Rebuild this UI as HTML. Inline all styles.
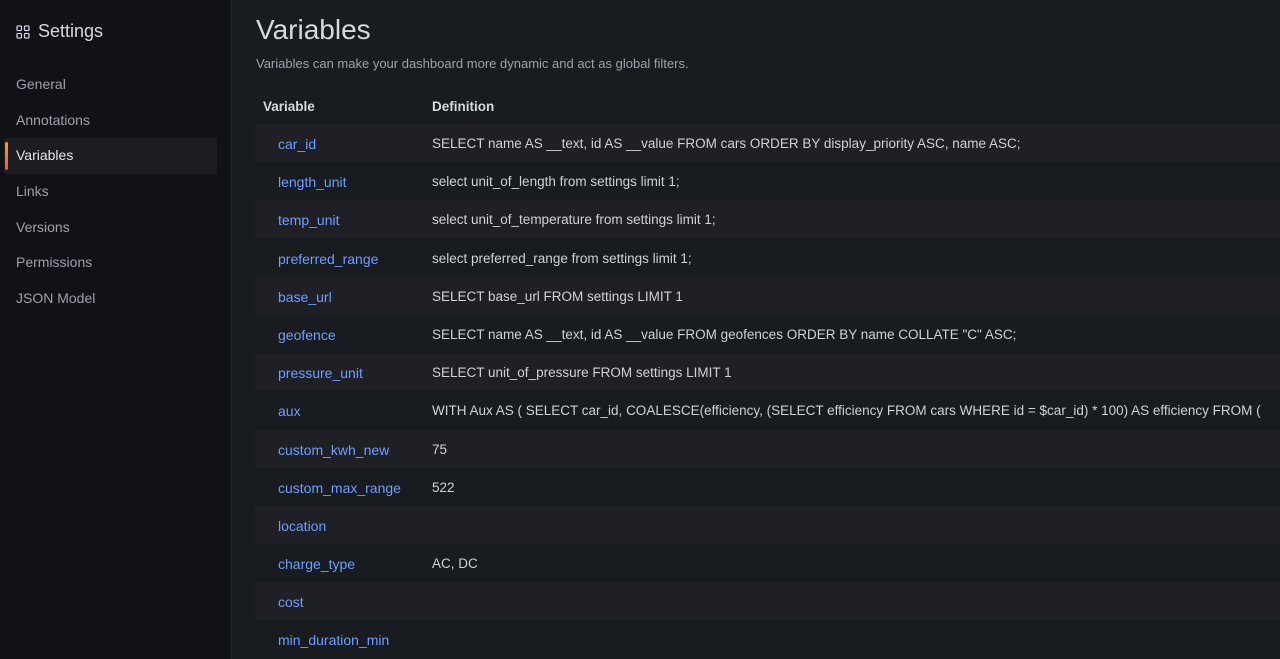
<!DOCTYPE html>
<html><head><style>
*{margin:0;padding:0;box-sizing:border-box}
body{width:1280px;height:659px;overflow:hidden;background:#181b1f;font-family:"Liberation Sans",sans-serif;color:#ccccdc;position:relative}
.side{position:absolute;left:0;top:0;width:232px;height:659px;background:#111217;border-right:1px solid #25272d}
.st{position:absolute;left:16px;top:21px;font-size:18px;color:#d8d9e0;display:flex;align-items:center;gap:8px}
.nav{position:absolute;left:4px;top:67px;width:213px}
.nav div{height:35.7px;line-height:35.7px;padding-left:12px;font-size:14px;color:#9fa1ab;border-radius:2px;position:relative}
.nav .a{background:#1c1d23;color:#e4e5ea}
.nav .a:before{content:"";position:absolute;left:1px;top:4px;bottom:4px;width:3px;border-radius:2px;background:linear-gradient(#ff9830,#f05a28)}
h1{position:absolute;left:256px;top:14px;font-size:28px;font-weight:400;color:#d8d9e0}
.sub{position:absolute;left:256px;top:56px;font-size:13px;color:#9fa1ab}
.hd{position:absolute;top:99px;font-size:13.5px;font-weight:bold;color:#d8d9e0}
.rows{position:absolute;left:255px;top:124px;right:0}
.r{height:38.2px;line-height:38.2px;font-size:13.5px;position:relative;white-space:nowrap;overflow:hidden}
.r:nth-child(odd){background:#1e2026}
.r .v{position:absolute;left:23px;color:#6e9fff;font-size:14px;top:1px}
.r .d{position:absolute;left:177px;color:#d0d1d9;top:1px}
</style></head><body>
<div class="side">
<div class="st"><svg width="14" height="14" viewBox="0 0 14 14" fill="none" stroke="#ccccdc" stroke-width="1.3"><rect x="1" y="1" width="4.5" height="4.5" rx="1"/><rect x="8.5" y="1" width="4.5" height="4.5" rx="1"/><rect x="1" y="8.5" width="4.5" height="4.5" rx="1"/><rect x="8.5" y="8.5" width="4.5" height="4.5" rx="1"/></svg>Settings</div>
<div class="nav"><div>General</div><div>Annotations</div><div class="a">Variables</div><div>Links</div><div>Versions</div><div>Permissions</div><div>JSON Model</div></div>
</div>
<h1>Variables</h1>
<div class="sub">Variables can make your dashboard more dynamic and act as global filters.</div>
<div class="hd" style="left:263px">Variable</div>
<div class="hd" style="left:432px">Definition</div>
<div class="rows">
<div class="r"><span class="v">car_id</span><span class="d">SELECT name AS __text, id AS __value FROM cars ORDER BY display_priority ASC, name ASC;</span></div>
<div class="r"><span class="v">length_unit</span><span class="d">select unit_of_length from settings limit 1;</span></div>
<div class="r"><span class="v">temp_unit</span><span class="d">select unit_of_temperature from settings limit 1;</span></div>
<div class="r"><span class="v">preferred_range</span><span class="d">select preferred_range from settings limit 1;</span></div>
<div class="r"><span class="v">base_url</span><span class="d">SELECT base_url FROM settings LIMIT 1</span></div>
<div class="r"><span class="v">geofence</span><span class="d">SELECT name AS __text, id AS __value FROM geofences ORDER BY name COLLATE "C" ASC;</span></div>
<div class="r"><span class="v">pressure_unit</span><span class="d">SELECT unit_of_pressure FROM settings LIMIT 1</span></div>
<div class="r"><span class="v">aux</span><span class="d">WITH Aux AS ( SELECT car_id, COALESCE(efficiency, (SELECT efficiency FROM cars WHERE id = $car_id) * 100) AS efficiency FROM (</span></div>
<div class="r"><span class="v">custom_kwh_new</span><span class="d">75</span></div>
<div class="r"><span class="v">custom_max_range</span><span class="d">522</span></div>
<div class="r"><span class="v">location</span><span class="d"></span></div>
<div class="r"><span class="v">charge_type</span><span class="d">AC, DC</span></div>
<div class="r"><span class="v">cost</span><span class="d"></span></div>
<div class="r"><span class="v">min_duration_min</span><span class="d"></span></div>
</div>
</body></html>
